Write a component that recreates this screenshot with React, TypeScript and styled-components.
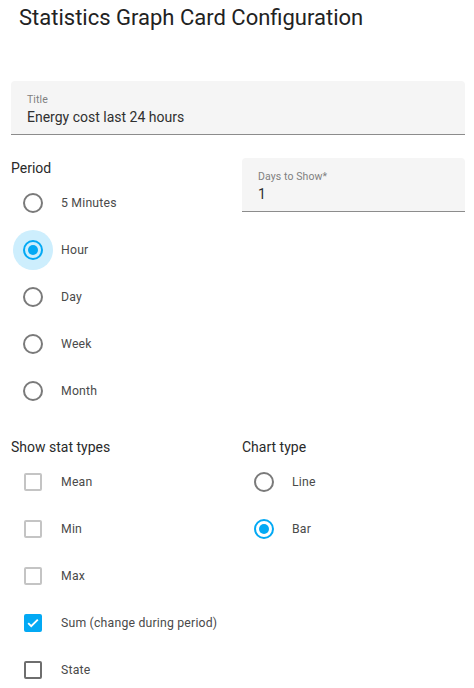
import React from "react";
import styled, { createGlobalStyle } from "styled-components";

const GlobalStyle = createGlobalStyle`
  body {
    margin: 0;
    background: #ffffff;
    font-family: Roboto, "Noto Sans", "Liberation Sans", sans-serif;
    color: #212121;
  }
`;

const Page = styled.div`
  width: 454px;
  padding: 5px 9px 0 11px;
`;

const Heading = styled.h1`
  margin: 0 0 50px 8px;
  font-size: 22px;
  line-height: 26px;
  font-weight: 400;
  color: #222222;
`;

const Field = styled.div`
  box-sizing: border-box;
  height: 54px;
  background: #f5f5f5;
  border-bottom: 1px solid #8c8c8c;
  border-radius: 4px 4px 0 0;
  padding: 13px 16px 0;
`;

const FieldLabel = styled.div`
  font-size: 10.5px;
  line-height: 12px;
  color: #808080;
  letter-spacing: 0.1px;
`;

const FieldValue = styled.div`
  margin-top: 2px;
  font-size: 14px;
  line-height: 18px;
  color: #303030;
`;

const Columns = styled.div`
  display: grid;
  grid-template-columns: 1fr 1fr;
  column-gap: 8px;
  row-gap: 23px;
  margin-top: 23px;
  align-items: start;
`;

const Section = styled.div`
  display: flex;
  flex-direction: column;
`;

const SectionLabel = styled.div`
  font-size: 14px;
  line-height: 20px;
  margin-bottom: 1px;
  color: #2a2a2a;
`;

const OptionRow = styled.label`
  display: flex;
  align-items: center;
  height: 47px;
  padding-left: 2px;
  gap: 8px;
`;

const Control = styled.span<{ $halo?: boolean }>`
  width: 40px;
  height: 40px;
  border-radius: 50%;
  display: flex;
  align-items: center;
  justify-content: center;
  background: ${(p) => (p.$halo ? "#cdeefd" : "transparent")};
`;

const Ring = styled.span<{ $on?: boolean }>`
  width: 20px;
  height: 20px;
  box-sizing: border-box;
  border-radius: 50%;
  border: 2px solid ${(p) => (p.$on ? "#03a9f4" : "#7a7a7a")};
  display: flex;
  align-items: center;
  justify-content: center;

  &::after {
    content: "";
    width: 10px;
    height: 10px;
    border-radius: 50%;
    background: ${(p) => (p.$on ? "#03a9f4" : "transparent")};
  }
`;

const Box = styled.span<{ $on?: boolean; $dark?: boolean }>`
  width: 18px;
  height: 18px;
  box-sizing: border-box;
  border-radius: 2px;
  border: 2px solid
    ${(p) => (p.$on ? "#03a9f4" : p.$dark ? "#6e6e6e" : "#c4c4c4")};
  background: ${(p) => (p.$on ? "#03a9f4" : "transparent")};
  display: flex;
  align-items: center;
  justify-content: center;
`;

const OptionLabel = styled.span`
  font-size: 12.25px;
  letter-spacing: 0.2px;
  color: #4a4a4a;
`;

const Radio = ({ label, on, halo }: { label: string; on?: boolean; halo?: boolean }) => (
  <OptionRow>
    <Control $halo={halo}>
      <Ring $on={on} />
    </Control>
    <OptionLabel>{label}</OptionLabel>
  </OptionRow>
);

const Check = ({ label, on, dark }: { label: string; on?: boolean; dark?: boolean }) => (
  <OptionRow>
    <Control>
      <Box $on={on} $dark={dark}>
        {on && (
          <svg width="14" height="14" viewBox="0 0 14 14">
            <path d="M2.2 7.2l3 3L11.8 3.6" fill="none" stroke="#fff" strokeWidth="1.9" />
          </svg>
        )}
      </Box>
    </Control>
    <OptionLabel>{label}</OptionLabel>
  </OptionRow>
);

const periods = ["5 Minutes", "Hour", "Day", "Week", "Month"];
const statTypes = ["Mean", "Min", "Max", "Sum (change during period)", "State"];

export default function App() {
  return (
    <Page>
      <GlobalStyle />
      <Heading>Statistics Graph Card Configuration</Heading>
      <Field>
        <FieldLabel>Title</FieldLabel>
        <FieldValue>Energy cost last 24 hours</FieldValue>
      </Field>
      <Columns>
        <Section>
          <SectionLabel>Period</SectionLabel>
          {periods.map((p) => (
            <Radio key={p} label={p} on={p === "Hour"} halo={p === "Hour"} />
          ))}
        </Section>
        <Field>
          <FieldLabel>Days to Show*</FieldLabel>
          <FieldValue>1</FieldValue>
        </Field>
        <Section>
          <SectionLabel>Show stat types</SectionLabel>
          {statTypes.map((s) => (
            <Check
              key={s}
              label={s}
              on={s.startsWith("Sum")}
              dark={s === "State"}
            />
          ))}
        </Section>
        <Section>
          <SectionLabel>Chart type</SectionLabel>
          <Radio label="Line" />
          <Radio label="Bar" on />
        </Section>
      </Columns>
    </Page>
  );
}
